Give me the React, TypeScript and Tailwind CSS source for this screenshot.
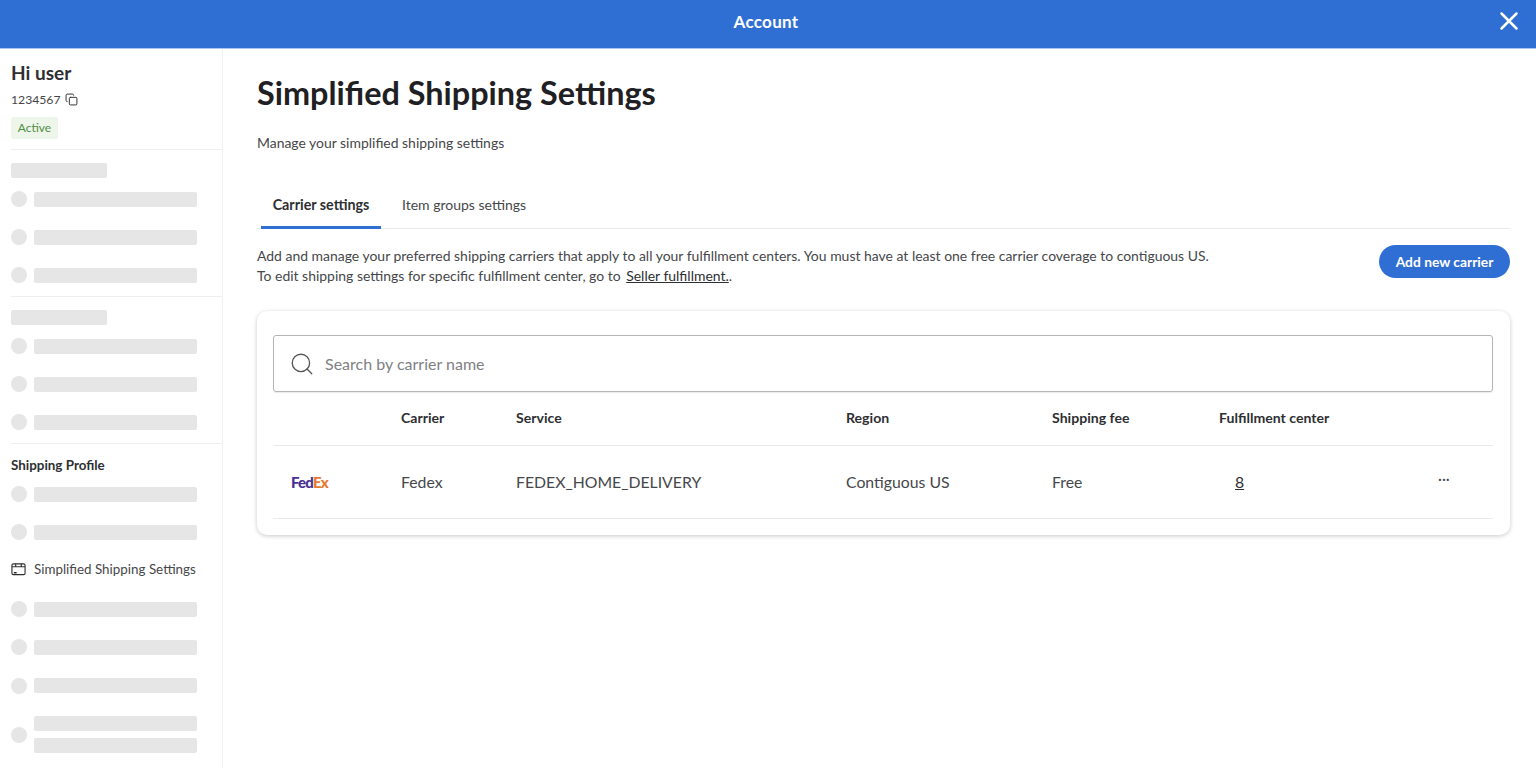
import { Copy, Search, X } from "lucide-react"

const FONT = "font-['Lato','Liberation_Sans',sans-serif]"

// placeholder nav row, the real labels are blurred out in the design
function SkeletonRow({ double }: { double?: boolean }) {
  return (
    <div className="flex items-center gap-[7px]">
      <div className="h-[16px] w-[16px] shrink-0 rounded-full bg-[#e6e6e6]" />
      <div className="flex w-[163px] flex-col gap-[7px]">
        <div className="h-[15px] rounded-[2px] bg-[#e6e6e6]" />
        {double && <div className="h-[15px] rounded-[2px] bg-[#e6e6e6]" />}
      </div>
    </div>
  )
}

function BoxIcon() {
  return (
    <svg width="15" height="14" viewBox="0 0 16 14" fill="none" stroke="#2e2f32" strokeWidth="1.2" className="shrink-0">
      <rect x="1" y="1.5" width="14" height="11.5" rx="1.5" />
      <path d="M1 4.6h14M5 1.5v3M11 1.5v3" />
      <path d="M3 11h3" strokeWidth="1.6" />
    </svg>
  )
}

function Sidebar() {
  return (
    <aside className="flex w-[223px] shrink-0 flex-col border-r border-[#f0f1f2] pl-[11px]">
      <div className="h-[101px] border-b border-[#eeeff0] pt-[13px]">
        <div className="text-[19px] font-bold leading-[22px] text-[#2e2f32]">Hi user</div>
        <div className="mt-[8px] flex items-center gap-[5px] text-[12.2px] leading-[16px] text-[#46474a]">
          1234567
          <Copy size={13} strokeWidth={1.8} className="-translate-y-px text-[#2e2f32]" />
        </div>
        <div className="mt-[9px] flex h-[22px] w-[47px] items-center justify-center rounded-[2px] bg-[#eef5ea] text-[12px] text-[#4f8f45]">
          Active
        </div>
      </div>

      <div className="h-[147px] border-b border-[#eeeff0] pt-[13px]">
        <div className="h-[15px] w-[96px] rounded-[2px] bg-[#e6e6e6]" />
        <div className="mt-[13px] flex flex-col gap-[22px]">
          <SkeletonRow />
          <SkeletonRow />
          <SkeletonRow />
        </div>
      </div>

      <div className="h-[147px] border-b border-[#eeeff0] pt-[13px]">
        <div className="h-[15px] w-[96px] rounded-[2px] bg-[#e6e6e6]" />
        <div className="mt-[13px] flex flex-col gap-[22px]">
          <SkeletonRow />
          <SkeletonRow />
          <SkeletonRow />
        </div>
      </div>

      <div className="pt-[13px]">
        <div className="text-[13.4px] font-bold leading-[16px] text-[#2e2f32]">Shipping Profile</div>
        <div className="mt-[13px] flex flex-col gap-[22px]">
          <SkeletonRow />
          <SkeletonRow />
        </div>
        <div className="mt-[21px] flex h-[16px] items-center gap-[8px] text-[13.4px] text-[#46474a]">
          <BoxIcon />
          <span className="whitespace-nowrap">Simplified Shipping Settings</span>
        </div>
        <div className="mt-[24px] flex flex-col gap-[22.4px]">
          <SkeletonRow />
          <SkeletonRow />
          <SkeletonRow />
          <SkeletonRow double />
        </div>
      </div>
    </aside>
  )
}

function CarrierTable() {
  const grid = "grid grid-cols-[128px_115px_330px_206px_167px_217px_1fr] items-center"
  return (
    <div className="mt-[25px] h-[224px] rounded-[10px] bg-white pl-[16px] pr-[17px] pt-[24px] shadow-[0_1px_4px_rgba(0,0,0,0.22)]">
      <div className="flex h-[57px] items-center rounded-[3px] border border-[#b4b5b7] pl-[15px] shadow-[0_1px_1px_rgba(0,0,0,0.08)]">
        <Search size={26} strokeWidth={1.2} className="text-[#55565a]" />
        <span className="ml-[10px] text-[16px] text-[#808185]">Search by carrier name</span>
      </div>
      <div className={`${grid} h-[54px] border-b border-[#e9eaeb] pb-[2px] text-[14.1px] font-bold text-[#2e2f32]`}>
        <div />
        <div>Carrier</div>
        <div>Service</div>
        <div>Region</div>
        <div>Shipping fee</div>
        <div>Fulfillment center</div>
        <div />
      </div>
      <div className={`${grid} h-[73px] border-b border-[#e9eaeb] text-[15.8px] text-[#46474a]`}>
        <div className="pl-[18px] text-[15px] font-black leading-none tracking-[-0.8px]">
          <span className="text-[#4a2f96]">Fed</span>
          <span className="text-[#e8792e]">Ex</span>
        </div>
        <div>Fedex</div>
        <div>FEDEX_HOME_DELIVERY</div>
        <div>Contiguous US</div>
        <div>Free</div>
        <div className="pl-[16px] text-[#2e2f32] underline">8</div>
        <div className="-translate-y-[4px] pl-[2px] text-[15px] leading-none">···</div>
      </div>
    </div>
  )
}

export default function App() {
  return (
    <div className={`flex h-[768px] w-[1536px] flex-col overflow-hidden bg-white ${FONT}`}>
      <header className="relative flex h-[49px] shrink-0 items-center justify-center border-b border-[#a9c8f0] bg-[#2f6fd4] pb-[5px] pr-[4px]">
        <span className="text-[17px] font-bold tracking-[0.3px] text-white">Account</span>
        <X size={30} strokeWidth={2} className="absolute right-[12px] top-[6px] text-white" />
      </header>

      <div className="flex min-h-0 flex-1">
        <Sidebar />

        <main className="flex-1 pl-[34px] pr-[26px] pt-[24px]">
          <h1 className="text-[32.4px] font-bold leading-[40px] text-[#1f2023]">Simplified Shipping Settings</h1>
          <p className="mt-[20px] text-[13.95px] leading-[20px] text-[#46474a]">Manage your simplified shipping settings</p>

          <div className="mt-[32px] flex h-[44px] items-start border-b border-[#e9eaeb] pl-[4px]">
            <div className="flex h-[44px] w-[120px] justify-center border-b-[3px] border-[#2f6fd4] pt-[10px] text-[14.3px] font-bold leading-[20px] text-[#2e2f32]">
              Carrier settings
            </div>
            <div className="ml-[21px] pt-[10px] text-[14px] leading-[20px] text-[#46474a]">Item groups settings</div>
          </div>

          <div className="mt-[17px] flex items-start justify-between">
            <p className="text-[13.96px] leading-[20px] text-[#46474a]">
              Add and manage your preferred shipping carriers that apply to all your fulfillment centers. You must have at least one free carrier coverage to contiguous US.
              <br />
              To edit shipping settings for specific fulfillment center, go to <span className="ml-[2px] text-[#2e2f32] underline">Seller fulfillment.</span>.
            </p>
            <button className="-mt-px h-[33px] w-[131px] rounded-full bg-[#2f6fd4] pt-[2px] text-[13.8px] font-bold text-white">Add new carrier</button>
          </div>

          <CarrierTable />
        </main>
      </div>
    </div>
  )
}
